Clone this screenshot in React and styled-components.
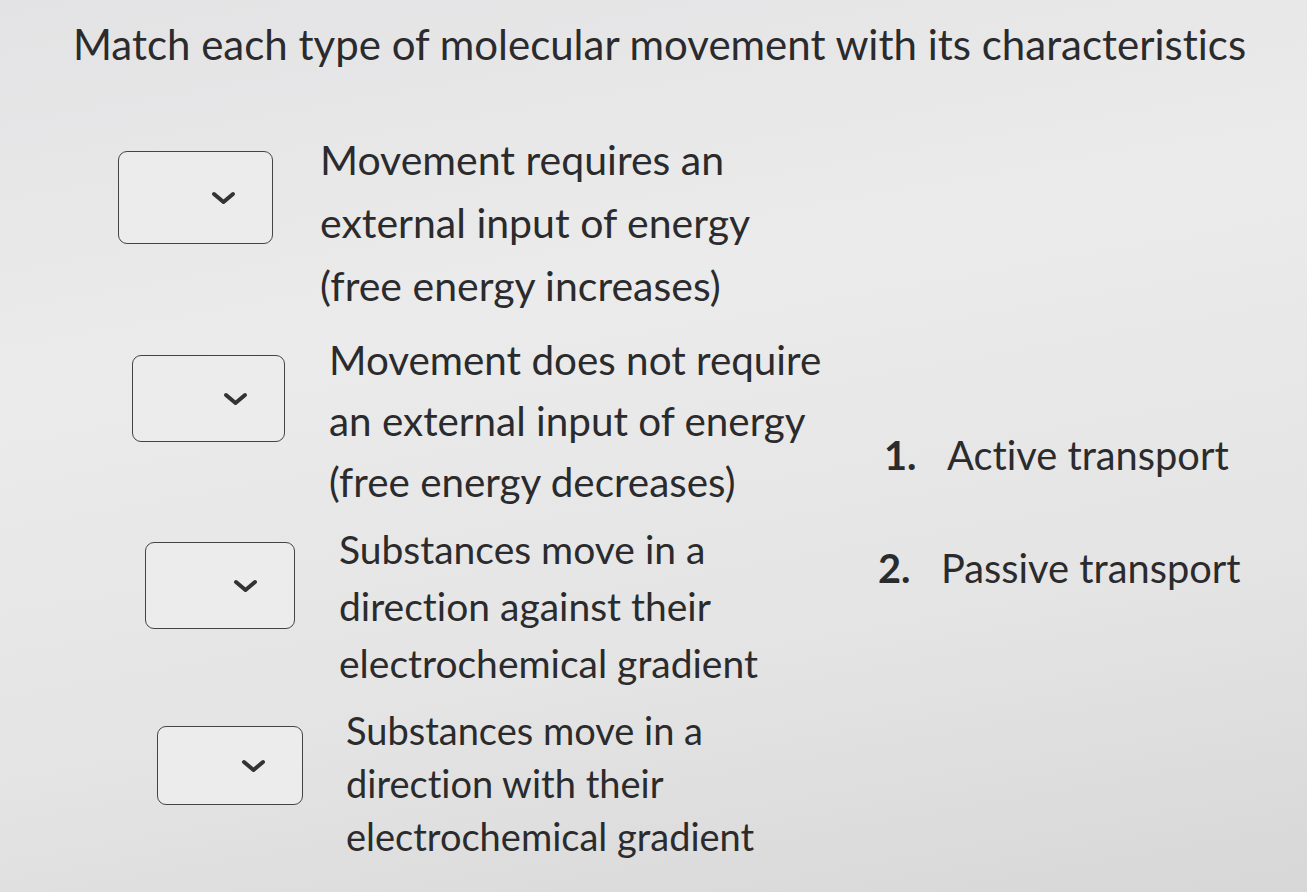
import React from 'react';
import styled, {createGlobalStyle} from 'styled-components';

const GlobalStyle = createGlobalStyle`
    html, body {
        margin: 0;
        padding: 0;
    }
    body {
        width: 1307px;
        height: 892px;
        overflow: hidden;
        font-family: Lato, "Open Sans", sans-serif;
        font-variant-ligatures: none;
        color: #2b2b2d;
    }
`

const Page = styled.div`
    box-sizing: border-box;
    width: 1307px;
    height: 892px;
    padding: 18px 0 0 73px;
    background: linear-gradient(170deg, #e3e3e5 0%, #ebebeb 35%, #e4e4e4 70%, #d7d7d7 100%);
`

const Title = styled.h1`
    margin: 0;
    font-size: 42px;
    font-weight: 400;
    line-height: 52px;
    white-space: nowrap;
`

const Body = styled.div`
    display: flex;
    flex-direction: row;
    margin-top: 58px;
`

const Pairs = styled.div`
    display: flex;
    flex-direction: column;
    width: 805px;
`

const Pair = styled.div`
    display: flex;
    flex-direction: row;
    align-items: flex-start;
    margin-left: ${p => p.$shift}px;
    margin-bottom: ${p => p.$gap}px;
`

const Select = styled.div`
    box-sizing: border-box;
    flex: none;
    width: ${p => p.$w}px;
    height: ${p => p.$h}px;
    margin-top: ${p => p.$top}px;
    margin-right: ${p => p.$space}px;
    border: 1.6px solid #444446;
    border-radius: 9px;
    background: #ececec;
    display: flex;
    align-items: center;
    justify-content: flex-end;
    padding-right: 36px;
`

const Chevron = styled.svg`
    width: 25px;
    height: 16px;
`

const Label = styled.div`
    font-size: ${p => p.$size}px;
    line-height: ${p => p.$lh}px;
    white-space: nowrap;
`

const Options = styled.ol`
    list-style: none;
    margin: 0;
    padding: 301px 0 0 0;
    display: flex;
    flex-direction: column;
    gap: 62px;
`

const Option = styled.li`
    display: flex;
    font-size: 39.8px;
    line-height: 51px;
    white-space: nowrap;
    margin-left: ${p => p.$shift}px;
`

const Num = styled.span`
    width: 63px;
    font-weight: 700;
`

const pairs = [
    {lines: ['Movement requires an', 'external input of energy', '(free energy increases)'], shift: 45, size: 41, lh: 63, gap: 12, box: [155, 93, 23, 47]},
    {lines: ['Movement does not require', 'an external input of energy', '(free energy decreases)'], shift: 59, size: 40.4, lh: 61, gap: 9, box: [153, 87, 26, 44]},
    {lines: ['Substances move in a', 'direction against their', 'electrochemical gradient'], shift: 72, size: 39, lh: 57, gap: 12, box: [150, 87, 21, 44]},
    {lines: ['Substances move in a', 'direction with their', 'electrochemical gradient'], shift: 84, size: 38, lh: 53, gap: 0, box: [146, 79, 22, 43]},
]

const Matching = () => {
    return(
        <>
        <GlobalStyle/>
        <Page>
            <Title>Match each type of molecular movement with its characteristics</Title>
            <Body>
                <Pairs>
                    {pairs.map((p, i) => (
                        <Pair key={i} $shift={p.shift} $gap={p.gap}>
                            <Select $w={p.box[0]} $h={p.box[1]} $top={p.box[2]} $space={p.box[3]}>
                                <Chevron viewBox="0 0 25 16">
                                    <path d="M3 4 L12.5 12 L22 4" fill="none" stroke="#333" strokeWidth="4" strokeLinecap="round" strokeLinejoin="round"/>
                                </Chevron>
                            </Select>
                            <Label $size={p.size} $lh={p.lh}>
                                {p.lines.map(l => <div key={l}>{l}</div>)}
                            </Label>
                        </Pair>
                    ))}
                </Pairs>
                <Options>
                    <Option $shift={6}><Num>1.</Num>Active transport</Option>
                    <Option $shift={0}><Num>2.</Num>Passive transport</Option>
                </Options>
            </Body>
        </Page>
        </>
    )
}

export default Matching
